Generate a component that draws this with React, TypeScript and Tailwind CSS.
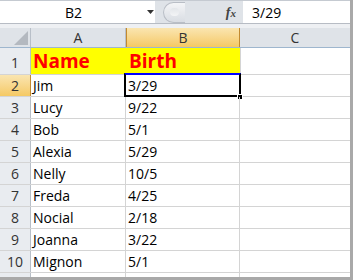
import React from "react";

const rows: [string, string][] = [
  ["Jim", "3/29"],
  ["Lucy", "9/22"],
  ["Bob", "5/1"],
  ["Alexia", "5/29"],
  ["Nelly", "10/5"],
  ["Freda", "4/25"],
  ["Nocial", "2/18"],
  ["Joanna", "3/22"],
  ["Mignon", "5/1"],
];

const font = { fontFamily: '"Open Sans", "Liberation Sans", sans-serif' };

function FormulaBar() {
  return (
    <div className="flex h-[23px] border-t border-[#c5cad1] bg-[#dfe3e8]">
      <div className="flex w-[155px] items-center bg-white">
        <span className="w-[148px] text-center text-[14px] text-black">B2</span>
        <svg width="8" height="5" viewBox="0 0 8 5">
          <path d="M0 0h7L3.5 4z" fill="#333" />
        </svg>
      </div>
      <div className="flex flex-1 items-center">
        <div className="ml-[8px] flex h-[21px] w-[22px] items-center justify-center rounded-l-full border border-r-0 border-[#b9bec6] bg-gradient-to-b from-[#f4f5f7] to-[#d9dde3]">
          <span className="h-[8px] w-[9px] rounded-full bg-gradient-to-b from-[#e3e6ea] to-[#f3f4f6]" />
        </div>
        <span className="ml-auto mr-[7px] text-[14px] italic font-bold text-[#444]" style={{ fontFamily: '"Liberation Serif", serif' }}>
          f<span className="text-[11px]">x</span>
        </span>
      </div>
      <div className="flex w-[107px] items-center bg-white pl-[9px] text-[14px] text-black">3/29</div>
    </div>
  );
}

export default function App() {
  return (
    <div className="h-[280px] w-[353px] overflow-hidden bg-white" style={font}>
      <div className="flex h-[280px] flex-col border-b-[3px] border-r-[3px] border-[#a9a9a9]">
        <FormulaBar />
        <div className="h-[5px] border-t border-[#b7bcc4] bg-[#eef0f3]" />
        {/* column headers */}
        <div className="flex h-[20px] border-b border-[#9eb6ce] bg-[#dfe3e8] text-[14px] text-[#333]">
          <div className="flex w-[31px] items-end justify-end border-r border-[#b8bfc8] pb-[2px] pr-[2px]">
            <svg width="14" height="14" viewBox="0 0 14 14">
              <path d="M14 0V14H0z" fill="#b4b9c0" />
            </svg>
          </div>
          <div className="flex w-[95px] items-center justify-center border-r border-[#b8bfc8]">A</div>
          <div className="flex w-[114px] items-center justify-center border-x border-[#c28a30] bg-gradient-to-b from-[#fae5b0] to-[#f5c963]">B</div>
          <div className="flex flex-1 items-center justify-center">C</div>
        </div>
        {/* row 1 */}
        <div className="flex h-[27px] border-b border-[#d4d4d4]">
          <div className="flex w-[31px] items-end justify-center border-r border-[#b8bfc8] bg-[#e9ecf0] pb-[1px] text-[14px] text-[#333]">1</div>
          <div className="flex w-[95px] items-end bg-[#ffff00] pl-[2px] text-[19px] font-bold leading-[26px] text-[#ff0000]">Name</div>
          <div className="flex w-[114px] items-end bg-[#ffff00] pl-[3px] text-[19px] font-bold leading-[26px] text-[#ff0000]">Birth</div>
          <div className="flex-1 border-l border-[#d4d4d4]" />
        </div>
        {rows.map(([name, birth], i) => {
          const sel = i === 0;
          return (
            <div key={i} className="flex h-[22px] border-b border-[#d4d4d4] text-[14px] text-black">
              <div
                className={
                  sel
                    ? "flex w-[31px] items-center justify-center border-r border-[#c28a30] bg-gradient-to-b from-[#fae5b0] to-[#f5c963] text-[#333]"
                    : "flex w-[31px] items-center justify-center border-r border-[#b8bfc8] bg-[#e9ecf0] text-[#333]"
                }
              >
                {i + 2}
              </div>
              <div className="flex w-[95px] items-center border-r border-[#d4d4d4] pl-[2px]">{name}</div>
              <div className="relative flex w-[114px] items-center border-r border-[#d4d4d4] pl-[2px]">
                {birth}
                {sel && (
                  <>
                    <span className="absolute -left-[2px] -top-[2px] h-[24px] w-[117px] border-2 border-black border-t-[#0000ff]" />
                    <span className="absolute -bottom-[4px] -right-[4px] h-[6px] w-[6px] border border-white bg-black" />
                  </>
                )}
              </div>
              <div className="flex-1" />
            </div>
          );
        })}
        <div className="flex flex-1">
          <div className="w-[31px] border-r border-[#b8bfc8] bg-[#e9ecf0]" />
          <div className="w-[95px] border-r border-[#d4d4d4]" />
          <div className="w-[114px] border-r border-[#d4d4d4]" />
        </div>
      </div>
    </div>
  );
}
